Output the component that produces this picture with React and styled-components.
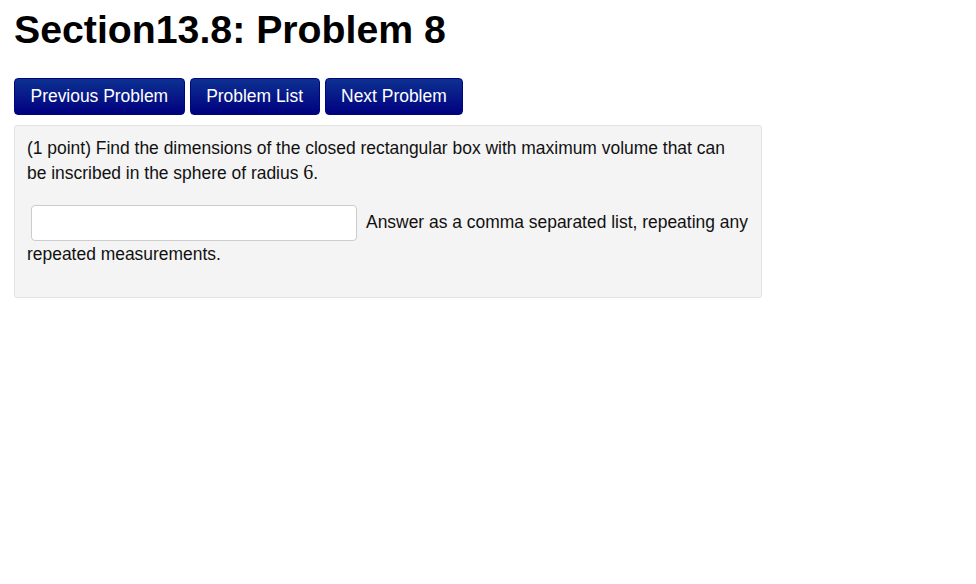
import React from "react";
import styled, { createGlobalStyle } from "styled-components";

const GlobalStyle = createGlobalStyle`
  html, body {
    margin: 0;
    padding: 0;
    background: #fff;
  }
  body {
    font-family: "Liberation Sans", Arial, sans-serif;
    font-size: 17.45px;
    line-height: 1.42857;
    color: #333;
  }
  * {
    box-sizing: border-box;
  }
`;

const Page = styled.div`
  padding: 0 0 0 14px;
  width: 762px;
`;

const Title = styled.h2`
  margin: 0;
  padding-top: 8px;
  font-size: 39.26px;
  line-height: 1.1;
  font-weight: bold;
  color: #000;
`;

const Nav = styled.div`
  display: flex;
  gap: 5px;
  margin-top: 27px;
`;

const NavButton = styled.button`
  font-family: "Liberation Sans", Arial, sans-serif;
  font-size: 17.45px;
  line-height: 25px;
  padding: 5px 15.5px;
  border: 1px solid #00057a;
  border-radius: 4px;
  color: #fff;
  background: linear-gradient(to bottom, #0d3191 0%, #00007f 100%);
  cursor: pointer;
`;

const ProblemBox = styled.div`
  margin-top: 10px;
  padding: 10px 8px 30px 12px;
  background: #f4f4f4;
  border: 1px solid #e3e3e3;
  border-radius: 3px;
  color: #111;
`;

const Para = styled.p`
  margin: 0;
  padding-right: 16px;
`;

const MathNum = styled.span`
  font-family: "Liberation Serif", "Times New Roman", serif;
  font-size: 20px;
  line-height: 1;
`;

const AnswerLine = styled.div`
  margin-top: 19px;
  line-height: 26px;
`;

const AnswerInput = styled.input`
  width: 326px;
  height: 36px;
  margin: 0 9px 0 4px;
  padding: 4px 8px;
  border: 1px solid #ccc;
  border-radius: 4px;
  background: #fff;
  font-size: 17px;
  vertical-align: middle;
`;

export default function App() {
  return (
    <>
      <GlobalStyle />
      <Page>
        <Title>Section13.8: Problem 8</Title>
        <Nav>
          <NavButton>Previous Problem</NavButton>
          <NavButton>Problem List</NavButton>
          <NavButton>Next Problem</NavButton>
        </Nav>
        <ProblemBox>
          <Para>
            (1 point) Find the dimensions of the closed rectangular box with maximum volume that can
            be inscribed in the sphere of radius <MathNum>6</MathNum>.
          </Para>
          <AnswerLine>
            <AnswerInput type="text" />
            Answer as a comma separated list, repeating any repeated measurements.
          </AnswerLine>
        </ProblemBox>
      </Page>
    </>
  );
}
